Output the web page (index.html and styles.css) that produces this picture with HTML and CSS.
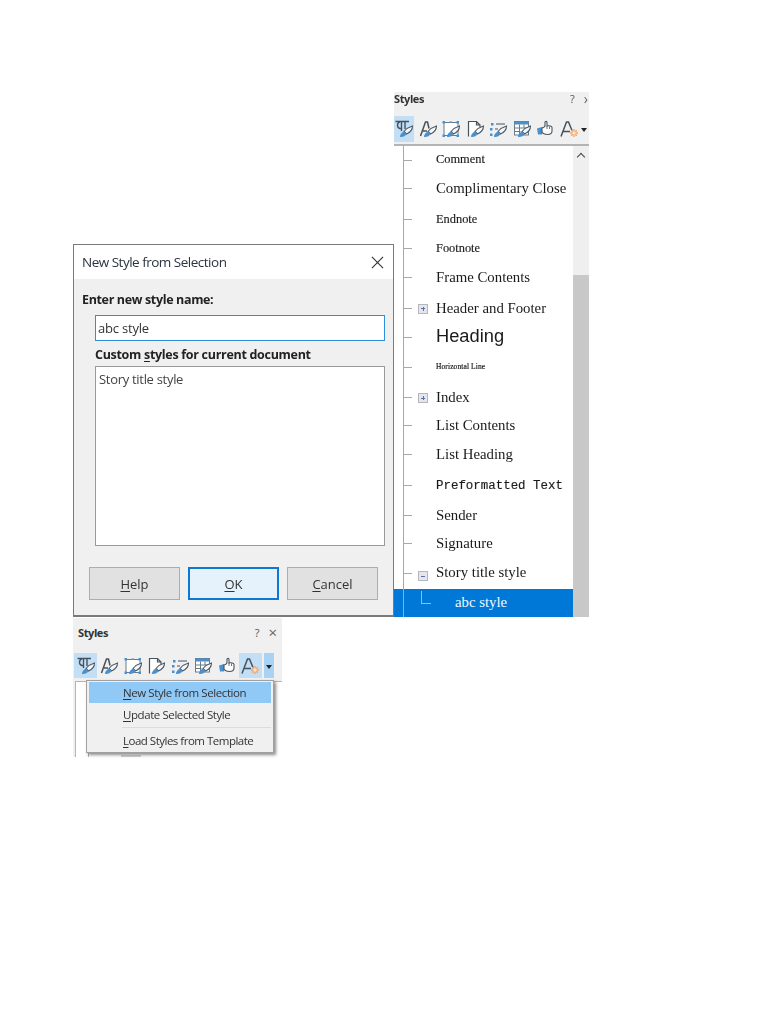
FILE: index.html
```html
<!DOCTYPE html>
<html lang="en">
<head>
<meta charset="utf-8">
<title>Styles</title>
<link rel="stylesheet" href="styles.css">
</head>
<body>
<svg class="defs" width="0" height="0" aria-hidden="true">
  <defs>
    <symbol id="brush" viewBox="0 0 20 20">
      <path d="M10 12.500C12 10 15 8 18.500 7C18.500 10 16 13.500 12.500 15Z" fill="#f4f7fa" stroke="#4d5862" stroke-width="1.100"/>
      <path d="M6 18C6 15.500 7.500 13.500 10 12.500L12.500 15C11.500 17 8.500 18.500 6 18Z" fill="#4a90cc"/>
    </symbol>
    <symbol id="i-para" viewBox="0 0 20 20">
      <path d="M1.500 2.500H15M6 2.800A3.500 3.500 0 0 0 6 9.500H7.500M7.500 2.500V12M11 2.500V10" fill="none" stroke="#47525c" stroke-width="1.400"/>
      <use href="#brush"/>
    </symbol>
    <symbol id="i-char" viewBox="0 0 20 20">
      <path d="M2.500 17L7.500 3H9.500L11 9.500M5 12H9" fill="none" stroke="#47525c" stroke-width="1.500"/>
      <use href="#brush"/>
    </symbol>
    <symbol id="i-frame" viewBox="0 0 20 20">
      <rect x="3" y="3.500" width="14" height="13" fill="#fff" stroke="#6c7a86" stroke-width="1"/>
      <path d="M1.500 2h2.500v2.500H1.500zM15.500 2h2.500v2.500h-2.500zM1.500 15.500h2.500v2.500H1.500zM15.500 15.500h2.500v2.500h-2.500zM8.500 2.500h2.500v1.500H8.500z" fill="#4a90cc"/>
      <use href="#brush"/>
    </symbol>
    <symbol id="i-page" viewBox="0 0 20 20">
      <path d="M3.500 17.500V2.500H11.500L15 6V8M11.500 2.500V6H15" fill="#fff" stroke="#47525c" stroke-width="1.200"/>
      <use href="#brush"/>
    </symbol>
    <symbol id="i-list" viewBox="0 0 20 20">
      <path d="M8 5h9M7 10h3" stroke="#47525c" stroke-width="1.200" fill="none"/>
      <path d="M3 4h2.500v2.500H3zM2 9h2.500v2.500H2zM2 14.500h2.500V17H2z" fill="#4a90cc"/>
      <use href="#brush"/>
    </symbol>
    <symbol id="i-table" viewBox="0 0 20 20">
      <rect x="2.500" y="2.500" width="14" height="13.500" fill="#fff" stroke="#6c7a86" stroke-width="1"/>
      <path d="M2.500 4h14" stroke="#4a90cc" stroke-width="3"/>
      <path d="M2.500 9h14M2.500 12.500h6M7.500 5.500V16M12 5.500V9" stroke="#6c7a86" stroke-width="1"/>
      <use href="#brush"/>
    </symbol>
    <symbol id="i-hand" viewBox="0 0 20 20">
      <path d="M2 9.500L7 8V15.500H3Z" fill="#4a90cc"/>
      <path d="M7 9C9 8.500 10 7.500 10 6.500V3.500C10 2 12 2 12 3.500V7C14 6.500 17 7 17 8.500V12C17 14.500 15 15.500 12.500 15.500C10 15.500 8 14.500 7 13.500Z" fill="#fff" stroke="#47525c" stroke-width="1.100"/>
      <path d="M12 7V10M14.500 7.500V10" stroke="#47525c" stroke-width="0.800"/>
    </symbol>
    <symbol id="i-new" viewBox="0 0 20 20">
      <path d="M2 17.500L7.500 3H9.500L13 11.500M4.500 12.500H11" fill="none" stroke="#47525c" stroke-width="1.500"/>
      <path d="M15 10v8M11 14h8M12.200 11.200l5.600 5.600M17.800 11.200l-5.600 5.600" stroke="#f4a468" stroke-width="1.400"/>
      <circle cx="15" cy="14" r="1.700" fill="#fde8d4"/>
    </symbol>
  </defs>
</svg>

<section class="panel side">
  <header class="panel-title side-title"><b>Styles</b><span class="help">?</span><span class="chev">›</span></header>
  <div class="toolbar side-tools">
    <span class="tool on"><svg><use href="#i-para"/></svg></span>
    <span class="tool"><svg><use href="#i-char"/></svg></span>
    <span class="tool"><svg><use href="#i-frame"/></svg></span>
    <span class="tool"><svg><use href="#i-page"/></svg></span>
    <span class="tool"><svg><use href="#i-list"/></svg></span>
    <span class="tool"><svg><use href="#i-table"/></svg></span>
    <span class="tool"><svg><use href="#i-hand"/></svg></span>
    <span class="tool"><svg><use href="#i-new"/></svg></span>
    <span class="drop"></span>
  </div>
  <div class="tree-wrap">
    <ul class="tree">
      <li class="row h27 t12">Comment</li>
      <li class="row h30 t15">Complimentary Close</li>
      <li class="row h31 t12 low">Endnote</li>
      <li class="row h28 t12">Footnote</li>
      <li class="row h30 t15">Frame Contents</li>
      <li class="row h31 t15 plus low">Header and Footer</li>
      <li class="row h27 t18 sans high">Heading</li>
      <li class="row h33 t7">Horizontal Line</li>
      <li class="row h28 t15 plus">Index</li>
      <li class="row h28 t15">List Contents</li>
      <li class="row h30 t15">List Heading</li>
      <li class="row h31 mono low">Preformatted Text</li>
      <li class="row h29 t15 low">Sender</li>
      <li class="row h28 t15">Signature</li>
      <li class="row h32 t15 minus">Story title style</li>
      <li class="row selected t15">abc style</li>
    </ul>
    <div class="scroll"><span class="up"></span><span class="thumb"></span></div>
  </div>
</section>

<section class="dialog">
  <header class="dlg-title"><span>New Style from Selection</span>
    <svg class="close" viewBox="0 0 14 14"><path d="M1 1l12 12M13 1L1 13" stroke="#333" stroke-width="1.200" fill="none"/></svg>
  </header>
  <div class="dlg-body">
    <label class="lbl first">Enter new style name:</label>
    <div class="field">abc style</div>
    <label class="lbl second">Custom <u>s</u>tyles for current document</label>
    <div class="listbox">Story title style</div>
    <div class="buttons">
      <span class="btn"><u>H</u>elp</span>
      <span class="btn ok"><u>O</u>K</span>
      <span class="btn"><u>C</u>ancel</span>
    </div>
  </div>
</section>

<section class="panel mini">
  <header class="panel-title mini-title"><b>Styles</b><span class="help">?</span><span class="x">×</span></header>
  <div class="toolbar mini-tools">
    <span class="tool on"><svg><use href="#i-para"/></svg></span>
    <span class="tool"><svg><use href="#i-char"/></svg></span>
    <span class="tool"><svg><use href="#i-frame"/></svg></span>
    <span class="tool"><svg><use href="#i-page"/></svg></span>
    <span class="tool"><svg><use href="#i-list"/></svg></span>
    <span class="tool"><svg><use href="#i-table"/></svg></span>
    <span class="tool"><svg><use href="#i-hand"/></svg></span>
    <span class="tool on"><svg><use href="#i-new"/></svg></span>
    <span class="drop on"></span>
  </div>
  <div class="mini-list"><span class="peek"></span></div>
  <div class="menu">
    <div class="item active"><u>N</u>ew Style from Selection</div>
    <div class="item"><u>U</u>pdate Selected Style</div>
    <div class="sep"></div>
    <div class="item last"><u>L</u>oad Styles from Template</div>
  </div>
</section>
</body>
</html>
```

FILE: styles.css
```css
* { box-sizing: border-box; }
html, body { margin: 0; padding: 0; background: #fff; }
body { position: relative; width: 768px; height: 1024px; overflow: hidden; font-family: "Open Sans", "Noto Sans", sans-serif; color: #222; }
.defs { position: absolute; }
ul { list-style: none; margin: 0; padding: 0; }
u { text-underline-offset: 2px; }
section { filter: blur(0.3px); }

.panel { position: absolute; background: #f0f0f0; display: flex; flex-direction: column; }
.panel-title { display: flex; align-items: center; font-size: 11px; }
.panel-title b { font-weight: 700; letter-spacing: -0.4px; color: #333; }
.help { margin-left: auto; color: #555; font-size: 11px; }
.chev { margin-left: 9px; color: #666; font-size: 14px; line-height: 1; }
.x { margin-left: 9px; color: #666; font-size: 15px; line-height: 1; }

.toolbar { display: flex; align-items: flex-start; }
.tool { display: flex; align-items: center; justify-content: center; }
.tool svg { width: 20px; height: 20px; }
.tool.on { background: #c2dff5; }
.drop { position: relative; }
.drop::after { content: ""; position: absolute; left: 2px; top: 12px; border: 3.500px solid transparent; border-top: 4px solid #222; border-bottom: 0; }
.drop.on { background: #a9d2f3; }

.side { left: 394px; top: 92px; width: 195px; height: 525px; }
.side-title { height: 23px; padding: 0 1px 10px 0; }
.side-tools { height: 31px; padding-top: 1px; border-bottom: 2px solid #b4b4b4; }
.side-tools .tool { width: 20px; height: 26px; margin-right: 3.500px; }
.side-tools .drop { width: 11px; height: 26px; margin-left: -3px; }
.tree-wrap { flex: 1; display: flex; background: #fff; min-height: 0; }
.tree { width: 179px; position: relative; }
.tree::before { content: ""; position: absolute; left: 9px; top: 0; bottom: 0; width: 1px; background: #a8a8a8; z-index: 2; }
.row { position: relative; display: flex; align-items: center; padding-left: 42px; color: #1a1a1a; font-family: "Liberation Serif", serif; white-space: nowrap; }
.row::before { content: ""; position: absolute; left: 10px; top: 50%; width: 8px; height: 1px; background: #a8a8a8; }
.h27 { height: 27px; } .h28 { height: 28px; } .h29 { height: 29px; } .h30 { height: 30px; } .h31 { height: 31px; } .h32 { height: 32px; padding-bottom: 2px; } .h33 { height: 33px; }
.low { padding-top: 2px; }
.high { padding-bottom: 2px; }
.t7 { font-size: 7.500px; letter-spacing: 0.100px; -webkit-text-stroke: 0.2px #222; }
.t12 { font-size: 12.400px; -webkit-text-stroke: 0.15px #222; }
.t15 { font-size: 14.800px; }
.t18 { font-size: 18.300px; }
.sans { font-family: "Liberation Sans", sans-serif; }
.mono { font-family: "Liberation Mono", monospace; font-size: 12.450px; -webkit-text-stroke: 0.15px #222; }
.plus::after, .minus::after { content: ""; position: absolute; left: 24px; top: calc(50% - 4px); width: 8px; height: 8px; border: 1px solid #b4b7bd; background: linear-gradient(#5a6fa8,#5a6fa8) center/4px 1px no-repeat, linear-gradient(#5a6fa8,#5a6fa8) center/1px 4px no-repeat, #e4e6ec; }
.minus::after { top: calc(50% - 2px); background: linear-gradient(#5a6fa8,#5a6fa8) center/4px 1px no-repeat, #e4e6ec; }
.selected { background: #0078d7; color: #f2f8fd; height: 28px; padding: 0 0 2px 61px; }
.selected::before { left: 27px; top: 2px; width: 9px; height: 12px; background: none; border-left: 1px solid #8fc0ea; border-bottom: 1px solid #8fc0ea; }
.scroll { width: 16px; background: #efefef; display: flex; flex-direction: column; position: relative; }
.up { position: absolute; left: 4.500px; top: 8px; width: 6px; height: 6px; border-left: 1.500px solid #444; border-top: 1.500px solid #444; transform: rotate(45deg); }
.thumb { margin-top: 129px; flex: 1; background: #c8c8c8; }

.dialog { position: absolute; left: 73px; top: 244px; width: 321px; height: 373px; background: #f0f0f0; border: 1px solid #7a7a7a; border-bottom-width: 2px; border-right-width: 1.500px; display: flex; flex-direction: column; z-index: 3; }
.dlg-title { height: 34px; background: #fff; display: flex; align-items: center; justify-content: space-between; padding: 0 9px 0 8px; font-size: 13.500px; letter-spacing: -0.500px; color: #2b3440; }
.close { width: 13px; height: 13px; }
.dlg-body { flex: 1; display: flex; flex-direction: column; padding: 0 8px 0 21px; font-size: 13px; }
.lbl { display: block; font-weight: 700; font-size: 12.500px; letter-spacing: -0.300px; color: #222; line-height: 16px; }
.first { margin: 13px 0 0 -13px; letter-spacing: -0.350px; }
.second { margin-top: 6px; }
.field { margin-top: 7px; height: 26px; background: #fff; border: 1px solid #2f8fdb; padding: 0 2px; display: flex; align-items: center; letter-spacing: -0.200px; color: #333; }
.listbox { margin-top: 3px; height: 180px; background: #fff; border: 1px solid #9a9a9a; padding: 3px 3px; letter-spacing: -0.300px; color: #444; }
.buttons { display: flex; gap: 8px; margin: 21px 0 0 -6px; }
.btn { width: 91px; height: 33px; display: flex; align-items: center; justify-content: center; background: #e1e1e1; border: 1px solid #adadad; color: #333; }
.btn.ok { background: #e5f1fb; border: 2px solid #0a78d4; }

.mini { left: 73px; top: 618px; width: 209px; height: 139px; }
.mini-title { height: 35px; padding: 0 5px 6px 5px; }
.mini-tools { height: 27px; padding-left: 1px; }
.mini-tools .tool { width: 23px; height: 25px; margin-right: 0.500px; }
.mini-tools .drop { width: 10px; height: 25px; margin-left: 2px; }
.mini-list { flex: 1; position: relative; overflow: hidden; margin: 1px 0 0 2px; background: #fff; border-left: 1px solid #b5b5b5; border-top: 1px solid #b5b5b5; }
.mini-list::before { content: ""; position: absolute; left: 12px; top: 0; bottom: 0; width: 1px; background: #b5b5b5; }
.peek { position: absolute; left: 45px; top: 73px; width: 20px; height: 2px; background: #d4d4d4; }
.menu { position: absolute; left: 13px; top: 62px; width: 188px; height: 73px; background: #f0f0f0; border: 1px solid #a0a0a0; padding: 1px 2px; box-shadow: 2px 2px 3px rgba(0,0,0,.45); font-size: 11.500px; letter-spacing: -0.420px; color: #333; }
.item { height: 21px; padding-left: 34px; white-space: pre; line-height: 21px; }
.item.active { background: #90c8f6; margin-bottom: 1px; }
.sep { height: 1px; background: #dcdcdc; margin: 2px 0 2px 33px; }
.item.last { line-height: 21px; letter-spacing: -0.500px; }
```
